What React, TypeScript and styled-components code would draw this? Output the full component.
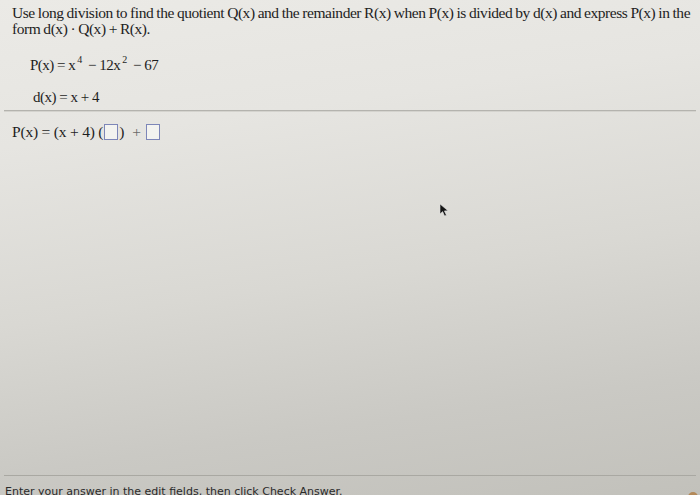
import React from "react";
import styled, { createGlobalStyle } from "styled-components";

const Global = createGlobalStyle`
  html, body { margin: 0; padding: 0; }
  body { width: 700px; height: 495px; overflow: hidden; }
`;

const Page = styled.div`
  position: relative;
  width: 700px;
  height: 495px;
  overflow: hidden;
  display: flex;
  flex-direction: column;
  background: linear-gradient(172deg, #ebeae6 0%, #e6e5e1 25%, #d9d8d3 55%, #cac9c4 80%, #c2c1bb 100%);
  font-family: "Liberation Serif", "Times New Roman", serif;
  color: #1e1e1e;
`;

const Question = styled.div`
  padding: 5px 0 0 12px;
  font-size: 15.5px;
  line-height: 16px;
  letter-spacing: -0.45px;
  word-spacing: -0.4px;
`;

const Line = styled.div`
  white-space: nowrap;
`;

const Given = styled.div`
  display: flex;
  flex-direction: column;
  gap: 16px;
  padding: 20px 0 0 30px;
  font-size: 15px;
  letter-spacing: -0.5px;
  line-height: 16px;
`;

const Eq = styled.div<{ $indent?: number }>`
  padding-left: ${(p) => p.$indent ?? 0}px;
  white-space: nowrap;
`;

const Sup = styled.sup`
  font-size: 10px;
  line-height: 0;
  vertical-align: 0;
  position: relative;
  top: -7px;
  margin: 0 3px 0 2px;
`;

const Rule = styled.div`
  margin: 5px 4px 0 4px;
  height: 1px;
  background: #b4b3ae;
  box-shadow: 0 1px 0 #d4d3ce;
`;

const Answer = styled.div`
  display: flex;
  align-items: center;
  padding: 12px 0 0 12px;
  font-size: 15.5px;
  letter-spacing: -0.2px;
  line-height: 18px;
  white-space: pre;
`;

const Box = styled.span`
  display: inline-block;
  width: 12px;
  height: 14px;
  border: 1px solid #7d86b8;
  background: #f3f3f0;
  margin: 0 1px;
`;

const Plus = styled.span`
  color: #6a6a6a;
  margin: 0 4px 0 8px;
`;

const Spacer = styled.div`
  flex: 1;
`;

const Footer = styled.div`
  border-top: 1px solid #a9a8a2;
  margin: 0 4px;
  padding: 9px 0 0 1px;
  height: 10px;
  font-family: "DejaVu Sans", Verdana, sans-serif;
  font-size: 11px;
  line-height: 14px;
  color: #2a2a2a;
  white-space: nowrap;
`;

const Cursor = styled.svg`
  position: absolute;
  left: 439px;
  top: 203px;
`;

const Dot = styled.div`
  position: absolute;
  right: 2px;
  bottom: -4px;
  width: 10px;
  height: 7px;
  border-radius: 5px 5px 0 0;
  background: #b48a5a;
`;

export default function App() {
  return (
    <>
      <Global />
      <Page>
        <Question>
          <Line>
            Use long division to find the quotient Q(x) and the remainder R(x) when P(x) is divided by d(x) and express P(x) in the
          </Line>
          <Line>form d(x) · Q(x) + R(x).</Line>
        </Question>
        <Given>
          <Eq>
            P(x) = x<Sup>4</Sup> − 12x<Sup>2</Sup> − 67
          </Eq>
          <Eq $indent={3}>d(x) = x + 4</Eq>
        </Given>
        <Rule />
        <Answer>
          P(x) = (x + 4) (<Box />)<Plus>+</Plus>
          <Box />
        </Answer>
        <Spacer />
        <Footer>Enter your answer in the edit fields, then click Check Answer.</Footer>
        <Cursor width="12" height="14" viewBox="0 0 12 14">
          <path d="M1 1 L1 11 L3.6 8.6 L5.6 13 L7.4 12.2 L5.4 7.9 L9 7.7 Z" fill="#141414" stroke="#ddd" strokeWidth="0.6" />
        </Cursor>
        <Dot />
      </Page>
    </>
  );
}
